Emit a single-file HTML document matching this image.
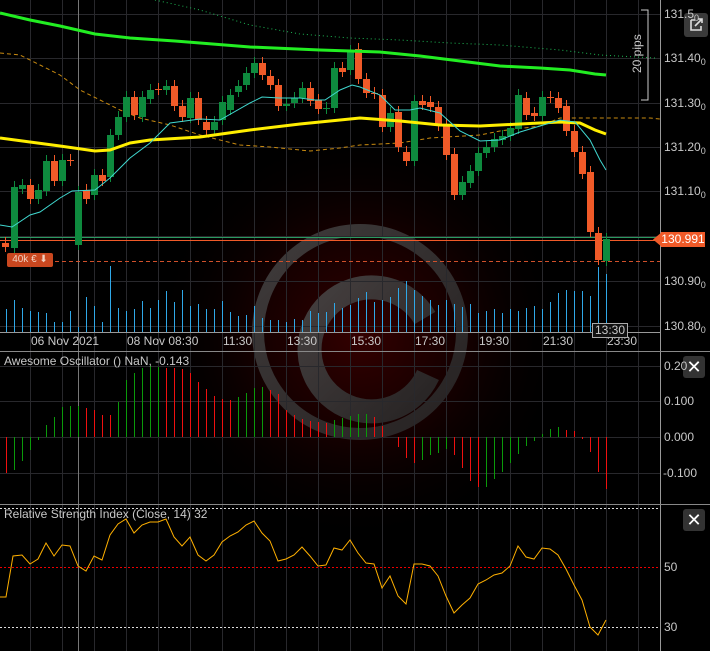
<!DOCTYPE html>
<html><head><meta charset="utf-8"><style>
html,body{margin:0;padding:0;background:#000;width:710px;height:651px;overflow:hidden;font-family:"Liberation Sans",sans-serif}
#c{position:absolute;left:0;top:0}
.t{position:absolute;color:#c8c8c8;font-size:12px;white-space:nowrap}
.ax{position:absolute;left:664px;color:#c8c8c8;font-size:12px}
.ax sub{font-size:9px;vertical-align:-3px}
.btn{position:absolute;width:22px;height:22px;background:#333;border-radius:3px;color:#fff;font-size:18px;line-height:22px;text-align:center}
</style></head><body>
<svg id="c" width="710" height="651" xmlns="http://www.w3.org/2000/svg">
<defs>
<radialGradient id="glow" cx="360" cy="335" r="210" gradientUnits="userSpaceOnUse">
<stop offset="0" stop-color="#3a0000" stop-opacity="0.9"/><stop offset="0.5" stop-color="#220000" stop-opacity="0.6"/><stop offset="1" stop-color="#000" stop-opacity="0"/>
</radialGradient>
<linearGradient id="lg" x1="0" y1="0" x2="1" y2="1"><stop offset="0" stop-color="#4a4a4a"/><stop offset="1" stop-color="#2a2a2a"/></linearGradient>
</defs>
<rect x="130" y="120" width="460" height="440" fill="url(#glow)"/>
<g id="logo" fill="none">
<circle cx="360" cy="332" r="102" stroke="url(#lg)" stroke-width="12" opacity="0.8"/>
<path d="M425 318 A62 62 0 1 0 428 375" stroke="url(#lg)" stroke-width="24" opacity="0.85"/>
</g>
<g id="grid"></g>
<g id="main"></g>
</svg>
<div class="btn" style="left:684px;top:13px;width:24px;height:24px;background:#3a3a3a"><svg width="24" height="24"><path d="M7 7h4M7 7v10h10v-4" stroke="#ddd" stroke-width="1.6" fill="none"/><path d="M11 13L18 6M14 6h4v4" stroke="#ddd" stroke-width="1.6" fill="none"/></svg></div>
<div class="btn" style="left:683px;top:356px">✕</div>
<div class="btn" style="left:683px;top:509px">✕</div>
<div class="ax" style="top:7px">131.5<sub>0</sub></div>
<div class="ax" style="top:51px">131.40<sub>0</sub></div>
<div class="ax" style="top:96px">131.30<sub>0</sub></div>
<div class="ax" style="top:140px">131.20<sub>0</sub></div>
<div class="ax" style="top:184px">131.10<sub>0</sub></div>
<div class="ax" style="top:274px">130.90<sub>0</sub></div>
<div class="ax" style="top:319px">130.80<sub>0</sub></div>
<div class="ax" style="top:359px">0.20</div>
<div class="ax" style="top:394px">0.100</div>
<div class="ax" style="top:430px">0.000</div>
<div class="ax" style="top:466px;left:663px">-0.100</div>
<div class="ax" style="top:560px">50</div>
<div class="ax" style="top:620px">30</div>
<div class="t" style="left:31px;top:334px">06 Nov 2021</div>
<div class="t" style="left:127px;top:334px">08 Nov 08:30</div>
<div class="t" style="left:223px;top:334px">11:30</div>
<div class="t" style="left:287px;top:334px">13:30</div>
<div class="t" style="left:351px;top:334px">15:30</div>
<div class="t" style="left:415px;top:334px">17:30</div>
<div class="t" style="left:479px;top:334px">19:30</div>
<div class="t" style="left:543px;top:334px">21:30</div>
<div class="t" style="left:607px;top:334px">23:30</div>
<div class="t" style="left:592px;top:323px;border:1px solid #aaa;background:#111;padding:0 2px;line-height:13px">13:30</div>
<div class="t" style="left:4px;top:354px">Awesome Oscillator () NaN, -0.143</div>
<div class="t" style="left:4px;top:507px">Relative Strength Index (Close, 14) 32</div>
<div class="t" style="left:630px;transform:rotate(-90deg);transform-origin:left top;top:73px">20 pips</div>
<div style="position:absolute;left:7px;top:253px;width:46px;height:14px;background:#c9471f;border-radius:2px;color:#f0d0c0;font-size:10px;line-height:14px;text-align:center">40k € ⬇</div>
<div style="position:absolute;left:661px;top:232px;width:44px;height:15px;background:#f05a28;color:#fff;font-size:12px;line-height:15px;text-align:center">130.991</div>
<svg style="position:absolute;left:653px;top:232px" width="9" height="15"><path d="M9 0L0 7.5L9 15z" fill="#f05a28"/></svg>
<script>
const ns="http://www.w3.org/2000/svg";
function el(p,t,a){const e=document.createElementNS(ns,t);for(const k in a)e.setAttribute(k,a[k]);p.appendChild(e);return e}
const G=document.getElementById('grid'),M=document.getElementById('main');
for(let x=30;x<=640;x+=32){el(G,'line',{x1:x+.5,y1:0,x2:x+.5,y2:651,stroke:'#28282c'});}
[14,58,103,147,191,236,281,326].forEach(y=>el(G,'line',{x1:0,y1:y+.5,x2:660,y2:y+.5,stroke:'#28282c'}));
[366,401,437,473].forEach(y=>el(G,'line',{x1:0,y1:y+.5,x2:660,y2:y+.5,stroke:'#28282c'}));
el(G,'line',{x1:78.5,y1:0,x2:78.5,y2:651,stroke:'#777'});
el(G,'line',{x1:660.5,y1:0,x2:660.5,y2:651,stroke:'#999'});
el(G,'line',{x1:0,y1:332.5,x2:660,y2:332.5,stroke:'#999'});
el(G,'line',{x1:0,y1:351.5,x2:710,y2:351.5,stroke:'#888'});
el(G,'line',{x1:0,y1:504.5,x2:710,y2:504.5,stroke:'#888'});
el(G,'line',{x1:0,y1:508.5,x2:660,y2:508.5,stroke:'#ddd','stroke-dasharray':'2,2'});
el(G,'line',{x1:0,y1:567.5,x2:660,y2:567.5,stroke:'#e00','stroke-dasharray':'2,2'});
el(G,'line',{x1:0,y1:627.5,x2:660,y2:627.5,stroke:'#ddd','stroke-dasharray':'2,2'});
const vol=[309,300,308,311,312,313,322,322,311,327,297,306,322,266,308,311,309,301,308,300,291,302,290,306,304,309,309,301,312,316,315,306,318,320,320,322,319,320,311,313,312,303,308,305,298,292,302,300,297,288,281,290,296,300,305,300,304,307,304,313,311,309,313,309,311,308,306,309,302,293,290,291,291,296,267,274];
vol.forEach((v,i)=>{const x=6+i*8;el(M,'line',{x1:x+.5,y1:v,x2:x+.5,y2:332,stroke:'#2fa8e8'})});
function pl(pts,a){el(M,'polyline',Object.assign({points:pts.map(p=>p.join(',')).join(' '),fill:'none'},a))}
pl([[155,0],[200,10],[250,25],[300,34],[350,38],[400,40],[450,43],[500,45],[560,50],[600,55],[655,58]],{stroke:'#1db954','stroke-dasharray':'1,3'});
pl([[0,53],[20,55],[40,65],[60,75],[80,90],[100,100],[120,110],[140,118],[170,125],[200,135],[240,145],[270,147],[310,151],[340,148],[360,145],[400,143],[430,138],[480,135],[500,131],[540,126],[560,118],[600,118],[650,118],[660,119]],{stroke:'#c88a10','stroke-dasharray':'4,3'});
el(M,'line',{x1:0,y1:237.5,x2:660,y2:237.5,stroke:'#2a9a60'});
el(M,'line',{x1:0,y1:240.5,x2:660,y2:240.5,stroke:'#f05a28'});
el(M,'line',{x1:55,y1:261.5,x2:660,y2:261.5,stroke:'#d0502a','stroke-dasharray':'4,3'});
const C=[[5,243,247],[14,248,187],[22,189,185],[30,185,199],[38,199,190],[46,191,161],[54,161,181],[62,181,160],[70,160,161],[78,245,192],[86,190,199],[94,195,175],[102,175,181],[110,177,135],[118,135,117],[126,117,97],[134,97,115],[142,117,97],[150,99,90],[158,89,90],[166,90,86],[174,86,106],[182,106,117],[190,118,98],[198,98,120],[206,122,130],[214,130,122],[222,120,102],[230,110,95],[238,92,86],[246,85,73],[254,73,63],[262,63,75],[270,76,85],[278,85,106],[286,106,104],[294,103,98],[302,98,88],[310,88,101],[318,100,109],[326,109,108],[334,108,68],[342,68,72],[350,70,51],[358,49,79],[366,79,93],[374,93,94],[382,95,127],[390,127,113],[398,112,147],[406,152,161],[414,161,101],[422,101,105],[430,102,107],[438,107,126],[446,124,155],[454,154,195],[462,195,182],[470,183,171],[478,171,153],[486,153,147],[494,147,139],[502,140,136],[510,136,128],[518,129,95],[526,98,115],[534,113,116],[542,116,97],[550,97,98],[558,98,108],[566,106,131],[574,131,152],[582,152,174],[590,172,232],[598,233,260],[606,261,239]];
C.forEach(([x,o,c])=>{const up=c<o,col=up?'#0e8a3e':'#f05a28',t=Math.min(o,c),b=Math.max(o,c);
el(M,'line',{x1:x+.5,y1:t-6,x2:x+.5,y2:b+5,stroke:col});
el(M,'rect',{x:x-3,y:t,width:7,height:Math.max(1,b-t),fill:col});});
pl([[0,138],[30,142],[60,146],[95,151],[110,150],[130,143],[150,140],[200,137],[250,130],[300,124],[340,120],[360,118],[400,121],[440,125],[480,126],[520,124],[560,122],[580,123],[595,130],[606,134]],{stroke:'#ffee00','stroke-width':3});
pl([[0,13],[30,20],[60,26],[95,34],[130,38],[175,41],[200,43],[250,47],[320,50],[350,51],[380,52],[420,56],[460,61],[500,66],[540,68],[570,70],[595,74],[606,75]],{stroke:'#22ee22','stroke-width':3});
pl([[0,225],[12,227],[30,215],[40,212],[60,198],[72,191],[95,190],[110,178],[130,158],[150,143],[170,123],[200,119],[220,120],[250,103],[262,97],[280,98],[300,98],[315,100],[325,100],[340,90],[352,85],[360,87],[380,95],[395,110],[410,110],[420,108],[440,113],[460,131],[480,141],[500,140],[520,132],[540,126],[560,120],[575,122],[590,140],[600,160],[606,170]],{stroke:'#40d8d0'});
pl([[641,10],[648,10],[648,100],[641,100]],{stroke:'#ccc'});
const ao=[[473,'r'],[470,'g'],[461,'g'],[450,'g'],[440,'g'],[425,'g'],[417,'g'],[407,'g'],[406,'g'],[406,'g'],[408,'r'],[410,'r'],[415,'r'],[415,'r'],[402,'g'],[380,'g'],[373,'g'],[368,'g'],[366,'g'],[367,'g'],[368,'r'],[368,'r'],[369,'r'],[373,'r'],[382,'r'],[389,'r'],[396,'r'],[399,'r'],[400,'r'],[397,'g'],[393,'g'],[388,'g'],[387,'g'],[390,'r'],[394,'r'],[410,'r'],[415,'r'],[419,'r'],[421,'r'],[422,'r'],[423,'r'],[420,'g'],[418,'g'],[416,'g'],[414,'g'],[414,'g'],[417,'r'],[426,'r'],[437,'r'],[447,'r'],[458,'r'],[463,'r'],[460,'g'],[455,'g'],[453,'g'],[449,'g'],[455,'r'],[468,'r'],[481,'r'],[487,'r'],[487,'g'],[479,'g'],[472,'g'],[463,'g'],[454,'g'],[446,'g'],[441,'g'],[434,'g'],[429,'g'],[427,'g'],[430,'r'],[431,'r'],[439,'r'],[452,'r'],[472,'r'],[489,'r']];
ao.forEach(([y,c],i)=>{const x=6+i*8;el(M,'line',{x1:x+.5,y1:437,x2:x+.5,y2:y,stroke:c=='g'?'#0a9a0a':'#f01010'})});
pl([[0,597],[6,597],[13,556],[22,555],[30,564],[38,559],[46,543],[54,556],[62,545],[70,546],[78,566],[86,571],[94,556],[102,560],[110,535],[118,524],[126,519],[134,533],[142,525],[150,522],[158,522],[166,519],[174,537],[182,546],[190,537],[198,555],[206,561],[214,555],[222,542],[230,536],[238,532],[246,525],[254,521],[262,533],[270,541],[278,561],[286,559],[294,555],[302,547],[310,556],[318,566],[326,565],[334,548],[342,550],[350,540],[358,553],[366,563],[374,564],[382,588],[390,576],[398,596],[406,604],[414,564],[422,564],[430,566],[438,576],[446,596],[454,613],[462,605],[470,598],[478,584],[486,580],[494,575],[502,573],[510,566],[518,546],[526,557],[534,559],[542,548],[550,549],[558,555],[566,569],[574,585],[582,600],[590,627],[598,635],[606,620]],{stroke:'#ffb000'});
</script>
</body></html>
